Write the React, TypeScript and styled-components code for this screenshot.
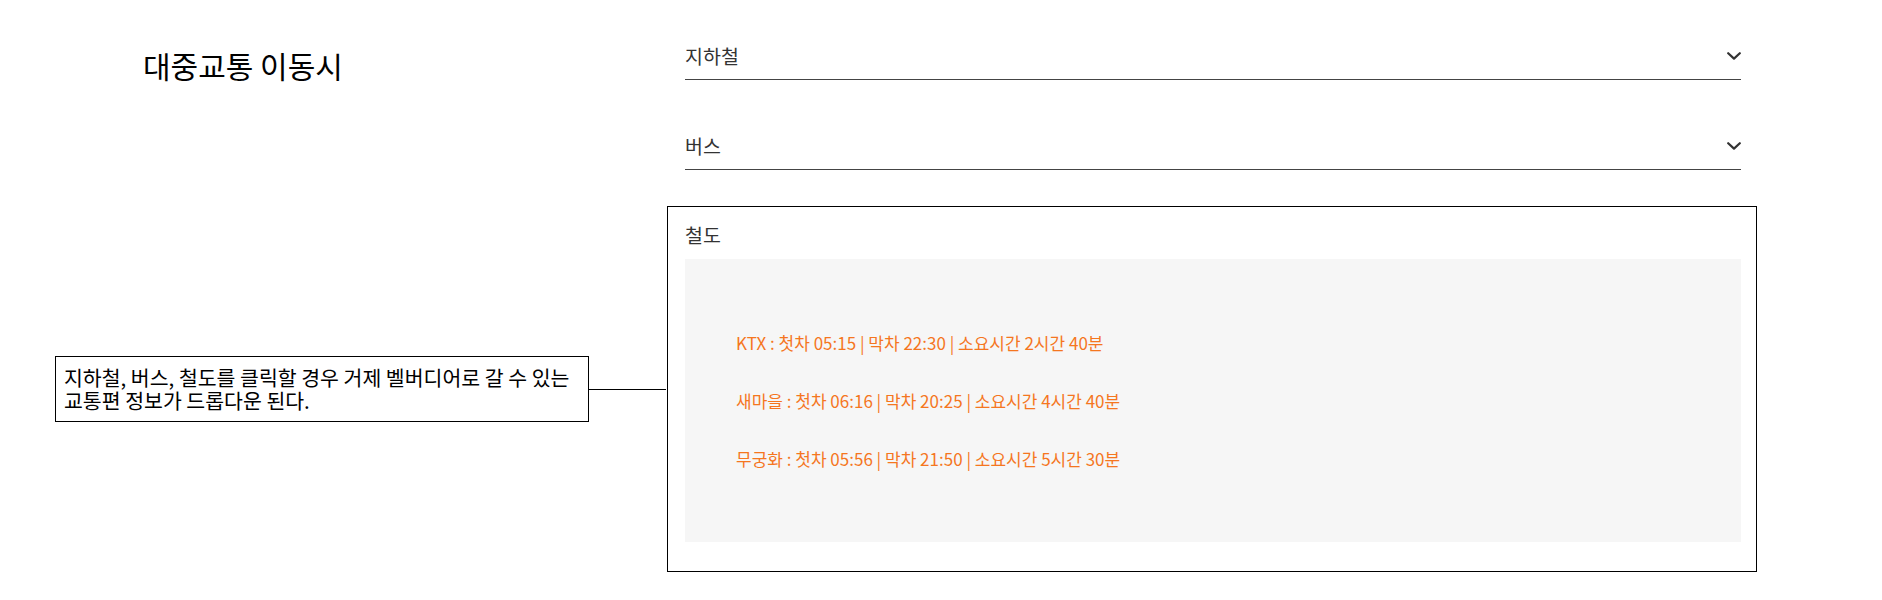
import React from "react";
import styled, { createGlobalStyle } from "styled-components";

const GlobalStyle = createGlobalStyle`
  html, body {
    margin: 0;
    padding: 0;
    background: #ffffff;
  }
  body {
    font-family: "Noto Sans CJK KR", "Noto Sans", sans-serif;
    color: #000;
  }
  * { box-sizing: border-box; }
`;

const Page = styled.div`
  position: relative;
  display: flex;
  align-items: flex-start;
  padding-top: 35px;
  min-height: 600px;
`;

const TitleColumn = styled.div`
  width: 685px;
  padding-left: 143px;
  flex-shrink: 0;
`;

const Title = styled.h2`
  margin: 12px 0 0;
  font-size: 30px;
  line-height: 36px;
  font-weight: 400;
  color: #000;
`;

const MainColumn = styled.div`
  width: 1056px;
  display: flex;
  flex-direction: column;
`;

const Dropdown = styled.div`
  display: flex;
  align-items: center;
  justify-content: space-between;
  padding: 8px 0 10px;
  border-bottom: 1px solid #444;
  & + & {
    margin-top: 45px;
  }
`;

const Label = styled.span`
  font-size: 19.5px;
  line-height: 26px;
  color: #333;
`;

const ChevronWrap = styled.span`
  display: flex;
  width: 14px;
  height: 8px;
  color: #333;
`;

const RailBox = styled.section`
  margin: 36px -16px 0 -18px;
  border: 1px solid #000;
  padding: 15px 15px 29px 17px;
`;

const RailHeading = styled.h3`
  margin: 0 0 11px;
  font-size: 19.5px;
  line-height: 26px;
  font-weight: 400;
  color: #333;
`;

const ScheduleList = styled.ul`
  list-style: none;
  margin: 0;
  padding: 72px 51px 71px;
  background: #f6f6f6;
  display: flex;
  flex-direction: column;
  gap: 34px;
`;

const ScheduleItem = styled.li`
  font-size: 17px;
  line-height: 24px;
  color: #f5761f;
`;

const Callout = styled.div`
  position: absolute;
  left: 55px;
  top: 356px;
  width: 534px;
  border: 1px solid #000;
  padding: 9px 8px;
  font-size: 20.5px;
  line-height: 23px;
  color: #000;
  background: #fff;
  white-space: nowrap;
  &::after {
    content: "";
    position: absolute;
    left: 100%;
    top: 50%;
    width: 78px;
    height: 1px;
    background: #000;
  }
`;

const Chevron = () => (
  <ChevronWrap>
    <svg width="14" height="8" viewBox="0 0 14 8" fill="none">
      <polyline
        points="1.2,1.2 7,6.6 12.8,1.2"
        stroke="currentColor"
        strokeWidth="2.2"
        strokeLinecap="round"
        strokeLinejoin="round"
      />
    </svg>
  </ChevronWrap>
);

const schedules = [
  "KTX : 첫차 05:15 | 막차 22:30 | 소요시간 2시간 40분",
  "새마을 : 첫차 06:16 | 막차 20:25 | 소요시간 4시간 40분",
  "무궁화 : 첫차 05:56 | 막차 21:50 | 소요시간 5시간 30분",
];

export default function App() {
  return (
    <>
      <GlobalStyle />
      <Page>
        <TitleColumn>
          <Title>대중교통 이동시</Title>
        </TitleColumn>
        <MainColumn>
          <Dropdown>
            <Label>지하철</Label>
            <Chevron />
          </Dropdown>
          <Dropdown>
            <Label>버스</Label>
            <Chevron />
          </Dropdown>
          <RailBox>
            <RailHeading>철도</RailHeading>
            <ScheduleList>
              {schedules.map((s) => (
                <ScheduleItem key={s}>{s}</ScheduleItem>
              ))}
            </ScheduleList>
          </RailBox>
        </MainColumn>
        <Callout>
          지하철, 버스, 철도를 클릭할 경우 거제 벨버디어로 갈 수 있는
          <br />
          교통편 정보가 드롭다운 된다.
        </Callout>
      </Page>
    </>
  );
}
